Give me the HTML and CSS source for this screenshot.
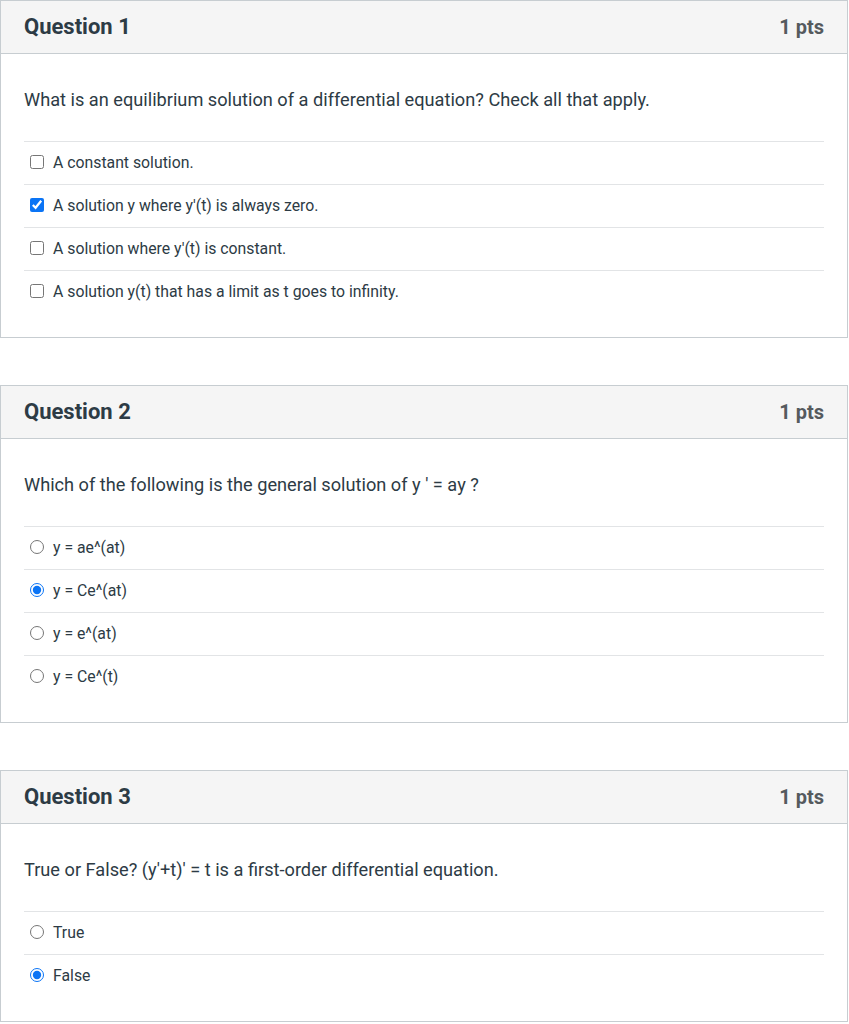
FILE: index.html
```html
<!DOCTYPE html>
<html>
<head>
<meta charset="utf-8">
<link rel="stylesheet" href="styles.css">
</head>
<body>
<div class="quiz">
  <div class="card">
    <div class="card-head"><h2 class="title">Question 1</h2><div class="pts">1 pts</div></div>
    <div class="card-body">
      <p class="qtext">What is an equilibrium solution of a differential equation? Check all that apply.</p>
      <div class="answers">
        <label class="answer"><input type="checkbox"><span>A constant solution.</span></label>
        <label class="answer"><input type="checkbox" checked><span>A solution y where y'(t) is always zero.</span></label>
        <label class="answer"><input type="checkbox"><span>A solution where y'(t) is constant.</span></label>
        <label class="answer"><input type="checkbox"><span>A solution y(t) that has a limit as t goes to infinity.</span></label>
      </div>
    </div>
  </div>
  <div class="card">
    <div class="card-head"><h2 class="title">Question 2</h2><div class="pts">1 pts</div></div>
    <div class="card-body">
      <p class="qtext">Which of the following is the general solution of y ' = ay ?</p>
      <div class="answers">
        <label class="answer"><input type="radio" name="q2"><span>y = ae^(at)</span></label>
        <label class="answer"><input type="radio" name="q2" checked><span>y = Ce^(at)</span></label>
        <label class="answer"><input type="radio" name="q2"><span>y = e^(at)</span></label>
        <label class="answer"><input type="radio" name="q2"><span>y = Ce^(t)</span></label>
      </div>
    </div>
  </div>
  <div class="card">
    <div class="card-head"><h2 class="title">Question 3</h2><div class="pts">1 pts</div></div>
    <div class="card-body">
      <p class="qtext">True or False? (y'+t)' = t is a first-order differential equation.</p>
      <div class="answers">
        <label class="answer"><input type="radio" name="q3"><span>True</span></label>
        <label class="answer"><input type="radio" name="q3" checked><span>False</span></label>
      </div>
    </div>
  </div>
</div>
</body>
</html>
```
FILE: styles.css
```css
html, body {
  margin: 0;
  padding: 0;
  background: #ffffff;
}
body {
  font-family: Roboto, "Liberation Sans", Arial, sans-serif;
  color: #2d3b45;
}
.quiz {
  display: flex;
  flex-direction: column;
  gap: 47px;
  width: 848px;
}
.card {
  border: 1px solid #c7cdd1;
  background: #fff;
}
.card-head {
  height: 52px;
  background: #f5f5f5;
  border-bottom: 1px solid #c7cdd1;
  display: flex;
  align-items: center;
  justify-content: space-between;
  padding: 0 23px 1px 23px;
  box-sizing: border-box;
  height: 53px;
}
.title {
  margin: 0;
  font-size: 22px;
  font-weight: 700;
  color: #2d3b45;
}
.pts {
  font-size: 20px;
  font-weight: 700;
  color: #555a5e;
}
.card-body {
  padding: 34px 23px 24px 23px;
}
.qtext {
  margin: 0 0 29px 0;
  font-size: 18.2px;
  line-height: 24px;
}
.answers {
  display: flex;
  flex-direction: column;
}
.answer {
  display: flex;
  align-items: center;
  height: 42px;
  padding-bottom: 2px;
  box-sizing: border-box;
  height: 43px;
  border-top: 1px solid #e2e4e6;
  font-size: 15.8px;
  color: #2d3b45;
}
.answer input {
  margin: 0 9px 0 6px;
  width: 14px;
  height: 14px;
  accent-color: #0b74f5;
}
```
